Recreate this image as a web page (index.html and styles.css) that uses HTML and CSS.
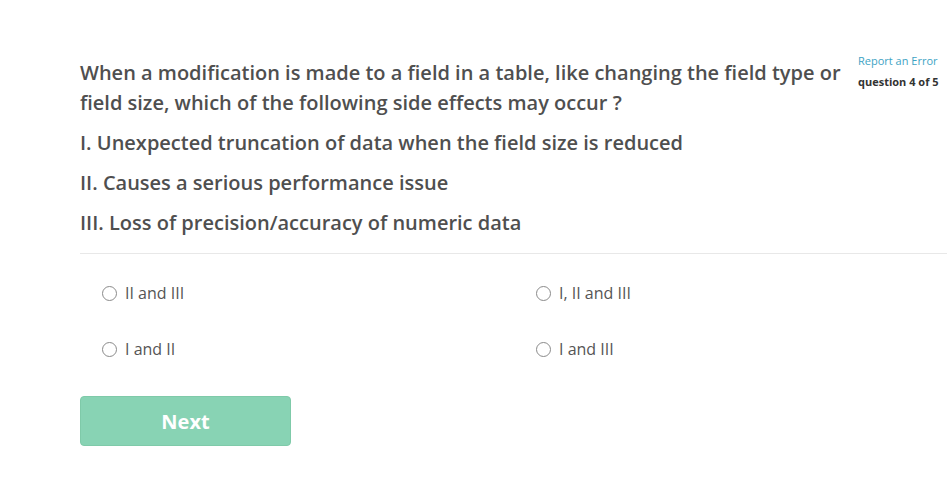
FILE: index.html
```html
<!DOCTYPE html>
<html>
<head>
<meta charset="utf-8">
<link rel="stylesheet" href="styles.css">
</head>
<body>
<div class="page">
  <div class="main">
    <div class="question">
      <p class="stem">When a modification is made to a field in a table, like changing the field type or field size, which of the following side effects may occur ?</p>
      <p class="stmt">I. Unexpected truncation of data when the field size is reduced</p>
      <p class="stmt">II. Causes a serious performance issue</p>
      <p class="stmt">III. Loss of precision/accuracy of numeric data</p>
    </div>
  </div>
  <div class="aside">
    <a class="report">Report an Error</a>
    <div class="count">question 4 of 5</div>
  </div>
</div>
<hr class="divider">
<div class="options">
  <label class="opt"><span class="radio"></span>II and III</label>
  <label class="opt"><span class="radio"></span>I, II and III</label>
  <label class="opt"><span class="radio"></span>I and II</label>
  <label class="opt"><span class="radio"></span>I and III</label>
</div>
<div class="actions">
  <button class="next">Next</button>
</div>
</body>
</html>
```
FILE: styles.css
```css
html, body {
  margin: 0;
  padding: 0;
  background: #fff;
  font-family: "Open Sans", sans-serif;
  color: #4f4f4f;
}
.page {
  display: flex;
}
.main {
  flex: 1;
  padding: 58px 8px 0 80px;
}
.question p {
  margin: 0;
}
.stem {
  font-size: 20px;
  font-weight: 600;
  line-height: 30px;
  margin-bottom: 10px !important;
}
.stmt {
  font-size: 20px;
  font-weight: 600;
  line-height: 30px;
  margin-bottom: 10px !important;
}
.aside {
  width: 94px;
  padding-top: 52px;
  flex: none;
}
.report {
  display: block;
  font-size: 11px;
  line-height: 18px;
  color: #3ea3c4;
}
.count {
  font-size: 11px;
  font-weight: 700;
  line-height: 18px;
  margin-top: 3px;
  color: #333;
}
.divider {
  margin: 5px 5px 0 80px;
  border: 0;
  border-top: 1px solid #e8e8e8;
}
.options {
  display: grid;
  grid-template-columns: 434px 1fr;
  row-gap: 36px;
  padding: 29px 0 0 102px;
}
.opt {
  display: flex;
  align-items: center;
  font-size: 16px;
  line-height: 20px;
  color: #555;
}
.radio {
  width: 13px;
  height: 13px;
  border: 1.5px solid #8a8a8a;
  border-radius: 50%;
  margin-right: 8px;
  flex: none;
}
.actions {
  padding: 37px 0 0 80px;
}
.next {
  width: 211px;
  height: 50px;
  background: #88d3b4;
  border: 1px solid #7fcaa9;
  border-radius: 4px;
  color: #fff;
  font-family: "Open Sans", sans-serif;
  font-size: 20px;
  font-weight: 700;
}
```
